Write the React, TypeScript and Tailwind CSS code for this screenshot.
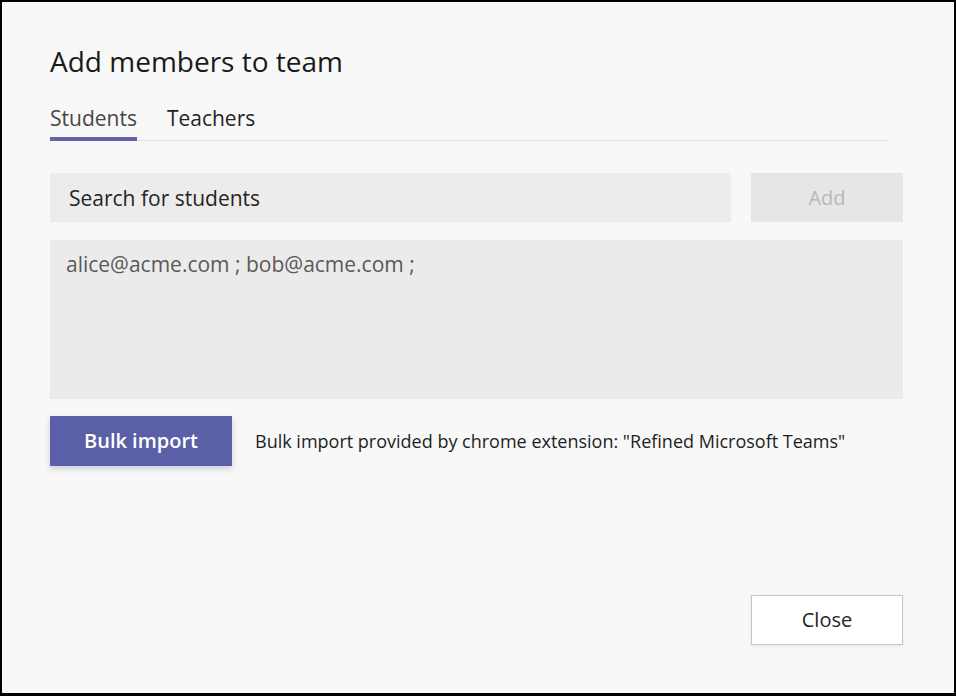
import React, { useState } from 'react';

const font = { fontFamily: '"Open Sans", "Noto Sans", Arial, sans-serif' };

export default function App() {
  const [tab, setTab] = useState<'students' | 'teachers'>('students');
  const [emails, setEmails] = useState('alice@acme.com ; bob@acme.com ;');

  return (
    <div
      className="w-[956px] h-[696px] bg-black pt-[2px] pl-[2px] pr-[2px] pb-[3px]"
      style={font}
    >
      <div className="h-full bg-[#f8f8f8] pl-[48px] pr-[51px] pt-[41px] pb-[48px] flex flex-col text-[#252423]">
        <h1 className="text-[28px] leading-[36px] text-[#1b1a19]">Add members to team</h1>

        {/* tabs */}
        <div className="mt-[25px] flex gap-[30px] border-b border-[#e1dfdd] mr-[15px]">
          <button
            onClick={() => setTab('students')}
            className={
              tab === 'students'
                ? 'text-[21px] leading-[28px] pb-[5px] border-b-[4px] border-[#6264a7] text-[#484644] -mb-px'
                : 'text-[21px] leading-[28px] pb-[5px] border-b-[4px] border-transparent text-[#252423] -mb-px'
            }
          >
            Students
          </button>
          <button
            onClick={() => setTab('teachers')}
            className={
              tab === 'teachers'
                ? 'text-[21px] leading-[28px] pb-[5px] border-b-[4px] border-[#6264a7] text-[#484644] -mb-px'
                : 'text-[21px] leading-[28px] pb-[5px] border-b-[4px] border-transparent text-[#252423] -mb-px'
            }
          >
            Teachers
          </button>
        </div>

        {/* search row */}
        <div className="mt-[32px] flex gap-[20px]">
          <input
            className="flex-1 h-[49px] bg-[#ececec] px-[19px] text-[21px] outline-none placeholder:text-[#252423]"
            placeholder={tab === 'students' ? 'Search for students' : 'Search for teachers'}
          />
          <button className="w-[152px] h-[49px] bg-[#e6e6e6] text-[20px] text-[#b8b8b8]">Add</button>
        </div>

        <textarea
          value={emails}
          onChange={(e) => setEmails(e.target.value)}
          className="mt-[18px] h-[159px] bg-[#ebebeb] px-[16px] py-[10px] text-[21px] leading-[28px] text-[#5a5958] resize-none outline-none"
        />

        <div className="mt-[17px] flex items-center gap-[23px]">
          <button className="w-[182px] h-[50px] bg-[#5b5fa8] text-white text-[20px] font-semibold shadow-[0_3px_6px_rgba(80,80,140,0.25)]">
            Bulk import
          </button>
          <span className="text-[18px] text-[#201f1e]">
            Bulk import provided by chrome extension: "Refined Microsoft Teams"
          </span>
        </div>

        <div className="mt-auto flex justify-end">
          <button className="w-[152px] h-[50px] bg-white border border-[#c8c6c4] text-[20px] text-[#252423] shadow-[0_1px_3px_rgba(0,0,0,0.08)]">
            Close
          </button>
        </div>
      </div>
    </div>
  );
}
